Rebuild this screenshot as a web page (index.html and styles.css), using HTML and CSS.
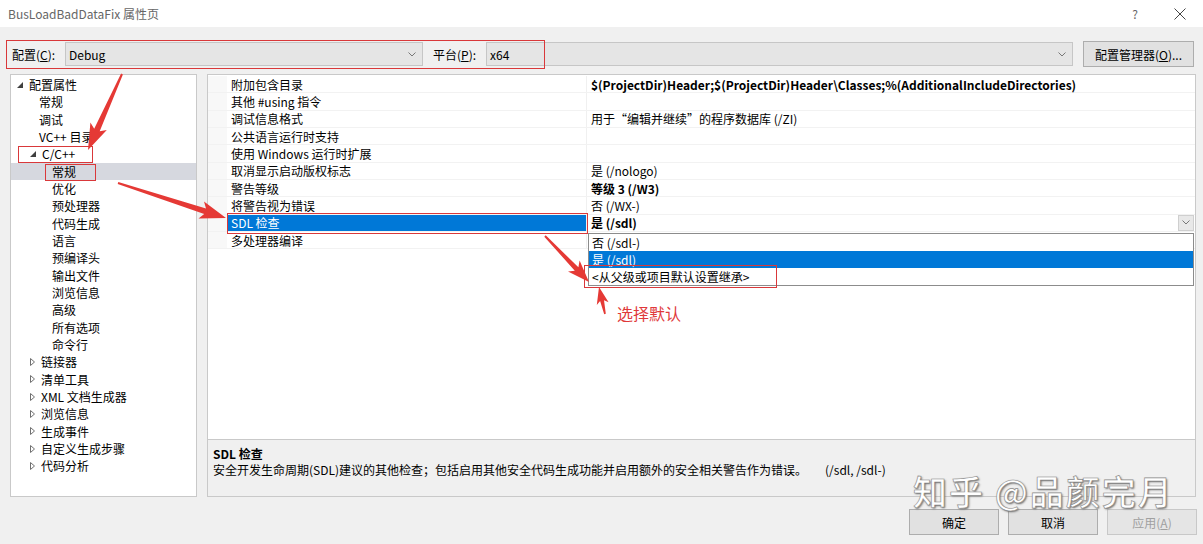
FILE: index.html
```html
<!DOCTYPE html>
<html lang="zh-CN">
<head>
    <meta charset="UTF-8">
    <title>BusLoadBadDataFix 属性页</title>
    <link rel="stylesheet" href="styles.css">
</head>
<body>

    <div class="titlebar">
        <span class="title">BusLoadBadDataFix 属性页</span>
        <span class="help">?</span>
        <svg class="close" width="12" height="12" viewBox="0 0 12 12"><path d="M0.5 0.5 L11.5 11.5 M11.5 0.5 L0.5 11.5" stroke="#444" stroke-width="1" fill="none"/></svg>
    </div>

    <div class="configbar">
        <span class="cfg-label">配置(<u>C</u>):</span>
        <div class="combo combo-config">
            <span>Debug</span>
            <svg class="chev" width="8" height="5" viewBox="0 0 8 5"><path d="M0.5 0.5 L4 4 L7.5 0.5" stroke="#777" fill="none"/></svg>
        </div>
        <span class="cfg-label plat-label">平台(<u>P</u>):</span>
        <div class="combo combo-platform">
            <span>x64</span>
            <svg class="chev" width="8" height="5" viewBox="0 0 8 5"><path d="M0.5 0.5 L4 4 L7.5 0.5" stroke="#777" fill="none"/></svg>
        </div>
        <button class="btn btn-manager">配置管理器(<u>O</u>)...</button>
    </div>

    <div class="main">
        <ul class="tree">
            <li class="lv0"><svg class="tri" width="6" height="6" viewBox="0 0 6 6"><path d="M6 0 V6 H0 Z" fill="#404040"/></svg>配置属性</li>
            <li class="lv1">常规</li>
            <li class="lv1">调试</li>
            <li class="lv1">VC++ 目录</li>
            <li class="lv1 node"><svg class="tri" width="6" height="6" viewBox="0 0 6 6"><path d="M6 0 V6 H0 Z" fill="#404040"/></svg>C/C++</li>
            <li class="lv2 sel">常规</li>
            <li class="lv2">优化</li>
            <li class="lv2">预处理器</li>
            <li class="lv2">代码生成</li>
            <li class="lv2">语言</li>
            <li class="lv2">预编译头</li>
            <li class="lv2">输出文件</li>
            <li class="lv2">浏览信息</li>
            <li class="lv2">高级</li>
            <li class="lv2">所有选项</li>
            <li class="lv2">命令行</li>
            <li class="lv1 node"><svg class="tri" width="5" height="8" viewBox="0 0 5 8"><path d="M0.5 0.5 L4.5 4 L0.5 7.5 Z" fill="none" stroke="#707070"/></svg>链接器</li>
            <li class="lv1 node"><svg class="tri" width="5" height="8" viewBox="0 0 5 8"><path d="M0.5 0.5 L4.5 4 L0.5 7.5 Z" fill="none" stroke="#707070"/></svg>清单工具</li>
            <li class="lv1 node"><svg class="tri" width="5" height="8" viewBox="0 0 5 8"><path d="M0.5 0.5 L4.5 4 L0.5 7.5 Z" fill="none" stroke="#707070"/></svg>XML 文档生成器</li>
            <li class="lv1 node"><svg class="tri" width="5" height="8" viewBox="0 0 5 8"><path d="M0.5 0.5 L4.5 4 L0.5 7.5 Z" fill="none" stroke="#707070"/></svg>浏览信息</li>
            <li class="lv1 node"><svg class="tri" width="5" height="8" viewBox="0 0 5 8"><path d="M0.5 0.5 L4.5 4 L0.5 7.5 Z" fill="none" stroke="#707070"/></svg>生成事件</li>
            <li class="lv1 node"><svg class="tri" width="5" height="8" viewBox="0 0 5 8"><path d="M0.5 0.5 L4.5 4 L0.5 7.5 Z" fill="none" stroke="#707070"/></svg>自定义生成步骤</li>
            <li class="lv1 node"><svg class="tri" width="5" height="8" viewBox="0 0 5 8"><path d="M0.5 0.5 L4.5 4 L0.5 7.5 Z" fill="none" stroke="#707070"/></svg>代码分析</li>
        </ul>

        <div class="right">
            <div class="grid">
                <div class="row"><span class="gutter"></span><span class="name">附加包含目录</span><span class="value bold">$(ProjectDir)Header;$(ProjectDir)Header\Classes;%(AdditionalIncludeDirectories)</span></div>
                <div class="row"><span class="gutter"></span><span class="name">其他 #using 指令</span><span class="value"></span></div>
                <div class="row"><span class="gutter"></span><span class="name">调试信息格式</span><span class="value">用于“编辑并继续”的程序数据库 (/ZI)</span></div>
                <div class="row"><span class="gutter"></span><span class="name">公共语言运行时支持</span><span class="value"></span></div>
                <div class="row"><span class="gutter"></span><span class="name">使用 Windows 运行时扩展</span><span class="value"></span></div>
                <div class="row"><span class="gutter"></span><span class="name">取消显示启动版权标志</span><span class="value">是 (/nologo)</span></div>
                <div class="row"><span class="gutter"></span><span class="name">警告等级</span><span class="value bold">等级 3 (/W3)</span></div>
                <div class="row"><span class="gutter"></span><span class="name">将警告视为错误</span><span class="value">否 (/WX-)</span></div>
                <div class="row active"><span class="gutter"></span><span class="name">SDL 检查</span><span class="value bold">是 (/sdl)<span class="dd-btn"><svg width="8" height="5" viewBox="0 0 8 5"><path d="M0.5 0.5 L4 4 L7.5 0.5" stroke="#777" fill="none"/></svg></span></span></div>
                <div class="row"><span class="gutter"></span><span class="name">多处理器编译</span><span class="value"></span></div>

                <ul class="dropdown">
                    <li>否 (/sdl-)</li>
                    <li class="hl">是 (/sdl)</li>
                    <li>&lt;从父级或项目默认设置继承&gt;</li>
                </ul>
            </div>
            <div class="desc">
                <p class="desc-title">SDL 检查</p>
                <p>安全开发生命周期(SDL)建议的其他检查；包括启用其他安全代码生成功能并启用额外的安全相关警告作为错误。<span class="flags">(/sdl, /sdl-)</span></p>
            </div>
        </div>
    </div>

    <div class="footer">
        <button class="btn">确定</button>
        <button class="btn">取消</button>
        <button class="btn" disabled>应用(<u>A</u>)</button>
    </div>

    <!-- annotations drawn over the dialog -->
    <div class="mark mark-config"></div>
    <div class="mark mark-cpp"></div>
    <div class="mark mark-general"></div>
    <div class="mark mark-sdl"></div>
    <div class="mark mark-inherit"></div>
    <span class="note">选择默认</span>

    <svg class="arrows" width="1203" height="544" viewBox="0 0 1203 544">
        <polygon points="121.1,73.6 94.2,128.7 90.4,122.6 88,150 106.8,130 99.7,131.2 122.9,74.4"/>
        <polygon points="117.7,184 204.2,214.1 198.5,218.5 226,218 204,201.4 206,208.4 118.3,182"/>
        <polygon points="544.3,236.7 574.8,270.7 568,271.6 589,282 579.6,260.6 578.4,267.3 545.7,235.3"/>
        <polygon points="605.8,313.8 604,300.2 608.6,302.3 599,287 596.8,304.9 600.1,301.1 604.2,314.2"/>
    </svg>

    <div class="watermark">知乎 @品颜完月</div>

</body>
</html>
```

FILE: styles.css
```css
* {
    margin: 0;
    padding: 0;
    box-sizing: border-box;
}

body {
    width: 1203px;
    height: 544px;
    overflow: hidden;
    position: relative;
    background-color: #f0f0f0;
    font-family: "Noto Sans CJK SC", "Noto Sans", sans-serif;
    font-size: 12px;
    color: #000;
}

u {
    text-decoration: underline;
}

/* title bar */
.titlebar {
    height: 27px;
    background-color: #fff;
    display: flex;
    align-items: center;
    padding-left: 8px;
    color: #666;
}

.title {
    flex: 1;
}

.help {
    color: #666;
    font-size: 12px;
    margin-right: 36px;
}

.close {
    margin-right: 17px;
}

/* configuration row */
.configbar {
    display: flex;
    align-items: center;
    height: 26px;
    margin-top: 14px;
    padding-left: 12px;
}

.cfg-label {
    width: 53px;
}

.plat-label {
    margin-left: 10px;
}

.combo {
    height: 24px;
    background-color: #e5e5e5;
    border: 1px solid #c6c6c6;
    display: flex;
    align-items: center;
    padding-left: 3px;
    padding-right: 6px;
}

.combo span {
    flex: 1;
}

.combo-config {
    width: 358px;
}

.combo-platform {
    width: 587px;
}

.btn {
    font-family: inherit;
    font-size: 12px;
    color: #000;
    background-color: #e1e1e1;
    border: 1px solid #adadad;
    height: 26px;
    width: 90px;
}

.btn[disabled] {
    color: #a0a0a0;
    border-color: #c8c8c8;
    background-color: #e5e5e5;
}

.btn-manager {
    width: 111px;
    margin-left: 10px;
}

/* main area */
.main {
    display: flex;
    gap: 10px;
    margin-top: 7px;
    padding-left: 10px;
    height: 423px;
}

.tree {
    list-style: none;
    width: 187px;
    background-color: #fff;
    border: 1px solid #c9c9c9;
    padding-top: 1px;
}

.tree li {
    height: 17.33px;
    display: flex;
    align-items: center;
    white-space: nowrap;
}

.tree .tri {
    margin-right: 6px;
}

.lv0 {
    padding-left: 6px;
}

.lv1 {
    padding-left: 28px;
}

.lv1.node {
    padding-left: 19px;
}

.lv2 {
    padding-left: 41px;
}

.tree .sel {
    background-color: #d6d8df;
}

.right {
    width: 989px;
    border: 1px solid #c9c9c9;
    display: flex;
    flex-direction: column;
}

.grid {
    position: relative;
    height: 365px;
    background-color: #fff;
    border-bottom: 1px solid #c9c9c9;
    padding-top: 1px;
}

.row {
    display: flex;
    height: 17.33px;
    align-items: center;
    border-bottom: 1px solid #f2f2f2;
}

.gutter {
    width: 19px;
    height: 100%;
    background-color: #f8f8f8;
}

.name {
    width: 360px;
    height: 100%;
    padding-left: 4px;
    display: flex;
    align-items: center;
    border-right: 1px solid #f0f0f0;
}

.value {
    flex: 1;
    height: 100%;
    padding-left: 4px;
    display: flex;
    align-items: center;
    white-space: nowrap;
}

.bold {
    font-weight: bold;
}

.row.active .name {
    background-color: #0078d7;
    color: #fff;
}

.row.active .value {
    justify-content: space-between;
    padding-right: 1px;
}

.dd-btn {
    width: 16px;
    height: 16px;
    background-color: #e8e8e8;
    border: 1px solid #cfcfcf;
    display: flex;
    align-items: center;
    justify-content: center;
}

.dropdown {
    list-style: none;
    position: absolute;
    left: 380px;
    top: 158px;
    width: 606px;
    background-color: #fff;
    border: 1px solid #8c8c8c;
}

.dropdown li {
    height: 17px;
    line-height: 17px;
    padding-left: 3px;
}

.dropdown .hl {
    background-color: #0078d7;
    color: #fff;
}

.desc {
    flex: 1;
    padding: 6px 5px 0;
    line-height: 16px;
}

.desc-title {
    font-weight: bold;
}

.flags {
    margin-left: 18px;
}

/* bottom buttons */
.footer {
    display: flex;
    justify-content: flex-end;
    gap: 9px;
    margin-top: 12px;
    padding-right: 6px;
}

/* red annotations */
.mark {
    position: absolute;
    border: 1px solid #d9383a;
}

.mark-config {
    left: 6px;
    top: 40px;
    width: 539px;
    height: 29px;
}

.mark-cpp {
    left: 18px;
    top: 146px;
    width: 75px;
    height: 17px;
}

.mark-general {
    left: 45px;
    top: 164px;
    width: 51px;
    height: 17px;
}

.mark-sdl {
    left: 227px;
    top: 213px;
    width: 361px;
    height: 21px;
}

.mark-inherit {
    left: 584px;
    top: 265px;
    width: 193px;
    height: 23px;
}

.note {
    position: absolute;
    left: 617px;
    top: 301px;
    color: #e0383a;
    font-size: 16px;
}

.arrows {
    position: absolute;
    left: 0;
    top: 0;
    pointer-events: none;
}

.arrows polygon {
    fill: #e53935;
}

.watermark {
    position: absolute;
    left: 913px;
    top: 474px;
    font-size: 34px;
    line-height: 1;
    font-weight: 500;
    letter-spacing: 2px;
    color: #fff;
    -webkit-text-stroke: 0.6px #8a8a8a;
    text-shadow: 1px 1px 2px #666;
    white-space: nowrap;
}
```
